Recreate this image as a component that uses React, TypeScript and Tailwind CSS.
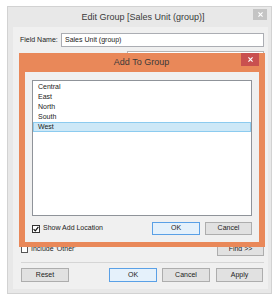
import React from "react";

const font = { fontFamily: '"Liberation Sans", Arial, sans-serif' };

function Check({ checked }: { checked: boolean }) {
  return (
    <div className="w-[8px] h-[8px] border border-[#333] bg-white flex items-center justify-center shrink-0">
      {checked && (
        <svg width="6" height="6" viewBox="0 0 6 6">
          <path d="M0.6 3.1 L2.3 4.8 L5.4 0.8" stroke="#111" strokeWidth="1.2" fill="none" />
        </svg>
      )}
    </div>
  );
}

function Btn({ label, def, w = "w-[48px]", h = "h-[14px]" }: { label: string; def?: boolean; w?: string; h?: string }) {
  return (
    <div
      className={`${w} ${h} flex items-center justify-center text-[7px] text-[#222] border ${
        def ? "border-[#5aa0e6] bg-[#e5f1fb]" : "border-[#adadad] bg-[#e1e1e1]"
      }`}
    >
      {label}
    </div>
  );
}

function XIcon({ size = 5 }: { size?: number }) {
  return (
    <svg width={size} height={size} viewBox="0 0 6 6">
      <path d="M0.5 0.5 L5.5 5.5 M5.5 0.5 L0.5 5.5" stroke="#fff" strokeWidth="1.4" />
    </svg>
  );
}

export default function App() {
  const items = ["Central", "East", "North", "South", "West"];
  return (
    <div className="relative w-[280px] h-[300px] overflow-hidden bg-white" style={font}>
      {/* Outer dialog */}
      <div className="ml-[7px] mt-[6px] w-[265px] h-[288px] bg-[#e8e8e8] border border-[#d2d2d2] flex flex-col">
        <div className="h-[20px] flex items-start">
          <div className="flex-1 pl-[25px] text-center text-[9px] leading-[20px] text-[#3a3a3a]">
            Edit Group [Sales Unit (group)]
          </div>
          <div className="mt-[2px] mr-[4px] w-[14px] h-[11px] bg-[#c4c4c4] flex items-center justify-center">
            <XIcon size={5} />
          </div>
        </div>
        <div className="ml-[5px] w-[255px] h-[262px] bg-[#f0f0f0] flex flex-col">
          <div className="mt-[6px] flex items-center h-[14px]">
            <div className="w-[48px] pl-[7px] text-[7px] text-[#222]">Field Name:</div>
            <div className="w-[203px] h-[14px] border border-[#abadb3] bg-white text-[7px] text-[#222] pl-[3px] flex items-center">
              Sales Unit (group)
            </div>
          </div>
          <div className="mt-[4px] ml-[114px] w-[137px] h-[185px] border border-[#b4b4b4] bg-white" />
          <div className="mt-[6px] h-[14px] flex items-center">
            <div className="ml-[8px] w-[7px] h-[7px] border border-[#555] bg-white" />
            <div className="ml-[3px] text-[7px] text-[#222] flex-1">Include 'Other'</div>
            <div className="mr-[4px]">
              <Btn label="Find >>" w="w-[47px]" />
            </div>
          </div>
          <div className="mt-[6px] ml-[8px] w-[243px] h-[1px] bg-[#d5d5d5]" />
          <div className="mt-[5px] flex items-center h-[14px]">
            <div className="ml-[8px]">
              <Btn label="Reset" />
            </div>
            <div className="ml-[40px]">
              <Btn label="OK" def />
            </div>
            <div className="ml-[5px]">
              <Btn label="Cancel" />
            </div>
            <div className="ml-[6px]">
              <Btn label="Apply" w="w-[47px]" />
            </div>
          </div>
        </div>
      </div>

      {/* Add To Group modal */}
      <div className="absolute left-[19px] top-[53px] w-[246px] h-[194px] bg-[#e98859] flex flex-col">
        <div className="h-[19px] flex items-start">
          <div className="flex-1 pl-[23px] text-center text-[9px] leading-[19px] text-[#3a3a3a]">Add To Group</div>
          <div className="mr-[6px] w-[18px] h-[13px] bg-[#c9504f] flex items-center justify-center">
            <XIcon size={5} />
          </div>
        </div>
        <div className="ml-[6px] w-[234px] h-[170px] bg-[#f0f0f0] flex flex-col">
          <div className="mt-[8px] ml-[7px] w-[220px] h-[136px] border border-[#8f9399] bg-white pt-[1px] flex flex-col">
            {items.map((it) => (
              <div
                key={it}
                className={`h-[10px] text-[7px] leading-[8px] text-[#222] pl-[4px] flex items-center border ${
                  it === "West" ? "bg-[#cde8f7] border-[#8ccbef]" : "border-transparent"
                }`}
              >
                {it}
              </div>
            ))}
          </div>
          <div className="mt-[6px] h-[13px] flex items-center">
            <div className="ml-[7px]">
              <Check checked />
            </div>
            <div className="ml-[3px] flex-1 text-[7px] text-[#222]">Show Add Location</div>
            <Btn label="OK" def h="h-[13px]" />
            <div className="ml-[5px] mr-[7px]">
              <Btn label="Cancel" w="w-[47px]" h="h-[13px]" />
            </div>
          </div>
        </div>
      </div>
    </div>
  );
}
